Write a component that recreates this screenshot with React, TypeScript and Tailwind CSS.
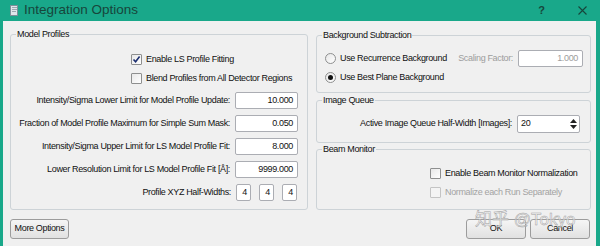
import React from "react";

const font = { fontFamily: '"Liberation Sans", Arial, sans-serif' };

const Check = ({ checked = false, disabled = false }: { checked?: boolean; disabled?: boolean }) => (
  <span
    className={`flex h-[11px] w-[11px] shrink-0 items-center justify-center rounded-[1px] border bg-gradient-to-br ${
      disabled ? "border-[#c4c4c4] from-[#f4f4f4] to-[#f4f4f4]" : "border-[#8e8f8f] from-[#e8e8e8] to-[#ffffff]"
    }`}
  >
    {checked && (
      <svg width="9" height="9" viewBox="0 0 9 9">
        <path d="M1.5 4.5 L3.6 6.8 L7.6 1.6" fill="none" stroke="#1c2f70" strokeWidth="1.6" />
      </svg>
    )}
  </span>
);

const Radio = ({ checked = false }: { checked?: boolean }) => (
  <span className="flex h-[11px] w-[11px] shrink-0 items-center justify-center rounded-full border border-[#8e8f8f] bg-gradient-to-br from-[#e6e6e6] to-white">
    {checked && <span className="h-[5px] w-[5px] rounded-full bg-[#111]" />}
  </span>
);

const TextBox = ({ value, w = "w-[63px]", disabled = false }: { value: string; w?: string; disabled?: boolean }) => (
  <div
    className={`flex h-[17px] shrink-0 items-center justify-end rounded-[2px] border border-[#abadb3] bg-white pr-[4px] ${w} ${
      disabled ? "text-[#9d9d9d]" : "text-[#111]"
    }`}
  >
    {value}
  </div>
);

const Group = ({ title, className, children }: { title: string; className: string; children: React.ReactNode }) => (
  <fieldset className={`rounded-[3px] border border-[#cdd3d7] ${className}`}>
    <legend className="ml-[5px] px-[1px] leading-[12px]">{title}</legend>
    {children}
  </fieldset>
);

const Row = ({ label, children }: { label: string; children: React.ReactNode }) => (
  <div className="flex h-[17px] items-center justify-end gap-[5px]">
    <span>{label}</span>
    {children}
  </div>
);

const Btn = ({ label, w }: { label: string; w: string }) => (
  <button className={`flex h-[20px] items-center justify-center rounded-[3px] border border-[#9c9c9c] bg-gradient-to-b from-[#f5f5f5] to-[#e1e1e1] text-[#111] ${w}`}>
    {label}
  </button>
);

export default function App() {
  return (
    <div
      className="relative flex h-[246px] w-[600px] flex-col whitespace-nowrap bg-[#19a88a] text-[9px] tracking-[-0.35px] text-[#111]"
      style={font}
    >
      {/* title bar */}
      <div className="flex h-[21px] shrink-0 items-center pl-[10px] tracking-normal">
        <svg width="9" height="12" viewBox="0 0 9 12">
          <rect x="0.5" y="0.5" width="7" height="10" fill="#dfe6ea" stroke="#7d8f99" />
          <rect x="2" y="2" width="5" height="1" fill="#9aa8b0" />
          <rect x="2" y="4" width="5" height="1" fill="#9aa8b0" />
          <rect x="2" y="6" width="4" height="1" fill="#9aa8b0" />
        </svg>
        <span className="ml-[5px] text-[13.5px] text-[#17463b]">Integration Options</span>
        <span className="ml-auto mr-[33px] text-[11px] font-bold text-[#17463b]">?</span>
        <svg width="9" height="9" viewBox="0 0 9 9" className="mr-[13px]">
          <path d="M0.5 0.5 L8.5 8.5 M8.5 0.5 L0.5 8.5" stroke="#17463b" strokeWidth="1.1" />
        </svg>
      </div>

      {/* body */}
      <div className="ml-[3px] mr-[4px] flex flex-1 flex-col bg-[#f0f0f0] pl-[7px] pt-[7px]">
        <div className="flex gap-[8px]">
          <Group title="Model Profiles" className="h-[182px] w-[298px] shrink-0">
            <div className="flex flex-col pl-[120px] pt-[10px]">
              <div className="flex h-[19px] items-center gap-[4px]">
                <Check checked />
                <span>Enable LS Profile Fitting</span>
              </div>
              <div className="flex h-[19px] items-center gap-[4px]">
                <Check />
                <span>Blend Profiles from All Detector Regions</span>
              </div>
            </div>
            <div className="mt-[4px] flex flex-col gap-[6px] pr-[9px]">
              <Row label="Intensity/Sigma Lower Limit for Model Profile Update:">
                <TextBox value="10.000" />
              </Row>
              <Row label="Fraction of Model Profile Maximum for Simple Sum Mask:">
                <TextBox value="0.050" />
              </Row>
              <Row label="Intensity/Sigma Upper Limit for LS Model Profile Fit:">
                <TextBox value="8.000" />
              </Row>
              <Row label="Lower Resolution Limit for LS Model Profile Fit [Å]:">
                <TextBox value="9999.000" />
              </Row>
              <div className="flex h-[17px] items-center justify-end pr-[1px]">
                <span className="mr-[5px]">Profile XYZ Half-Widths:</span>
                <div className="flex gap-[8px]">
                  <TextBox value="4" w="w-[15px] h-[16px] !pr-[3px]" />
                  <TextBox value="4" w="w-[15px] h-[16px] !pr-[3px]" />
                  <TextBox value="4" w="w-[15px] h-[16px] !pr-[3px]" />
                </div>
              </div>
            </div>
          </Group>

          <div className="flex w-[275px] shrink-0 flex-col pt-[1px]">
            <Group title="Background Subtraction" className="h-[64px]">
              <div className="flex flex-col gap-[2px] pl-[8px] pr-[7px] pt-[9px]">
                <div className="flex h-[17px] items-center">
                  <Radio />
                  <span className="ml-[4px]">Use Recurrence Background</span>
                  <span className="ml-auto mr-[5px] text-[#9d9d9d]">Scaling Factor:</span>
                  <TextBox value="1.000" w="w-[65px]" disabled />
                </div>
                <div className="flex h-[17px] items-center">
                  <Radio checked />
                  <span className="ml-[4px]">Use Best Plane Background</span>
                </div>
              </div>
            </Group>

            <Group title="Image Queue" className="mt-[1px] h-[49px]">
              <div className="flex items-center justify-end gap-[5px] pr-[10px] pt-[9px]">
                <span>Active Image Queue Half-Width [Images]:</span>
                <div className="flex h-[18px] w-[63px] rounded-[2px] border border-[#abadb3] bg-white">
                  <span className="flex flex-1 items-center pl-[3px]">20</span>
                  <div className="flex w-[12px] flex-col items-center justify-center gap-[2px]">
                    <svg width="7" height="4" viewBox="0 0 7 4">
                      <path d="M0 4 L3.5 0 L7 4 Z" fill="#222" />
                    </svg>
                    <svg width="7" height="4" viewBox="0 0 7 4">
                      <path d="M0 0 L3.5 4 L7 0 Z" fill="#222" />
                    </svg>
                  </div>
                </div>
              </div>
            </Group>

            <Group title="Beam Monitor" className="h-[67px]">
              <div className="flex flex-col pl-[113px] pt-[9px]">
                <div className="flex h-[19px] items-center gap-[4px]">
                  <Check />
                  <span>Enable Beam Monitor Normalization</span>
                </div>
                <div className="flex h-[19px] items-center gap-[4px] text-[#a3a3a3]">
                  <Check disabled />
                  <span>Normalize each Run Separately</span>
                </div>
              </div>
            </Group>
          </div>
        </div>

        <div className="mt-[9px] flex items-center pr-[6px]">
          <Btn label="More Options" w="w-[59px] h-[19px]" />
          <div className="ml-auto flex gap-[4px]">
            <Btn label="OK" w="w-[60px]" />
            <Btn label="Cancel" w="w-[60px]" />
          </div>
        </div>
      </div>

      {/* watermark */}
      <div
        className="absolute left-[475px] top-[207px] text-[17px] tracking-normal text-white/60 [-webkit-text-stroke:0.5px_#a0a0a0]"
        style={{ fontFamily: '"Liberation Sans", "Noto Sans CJK SC", sans-serif' }}
      >
        知乎 @Tokyo
      </div>
    </div>
  );
}
